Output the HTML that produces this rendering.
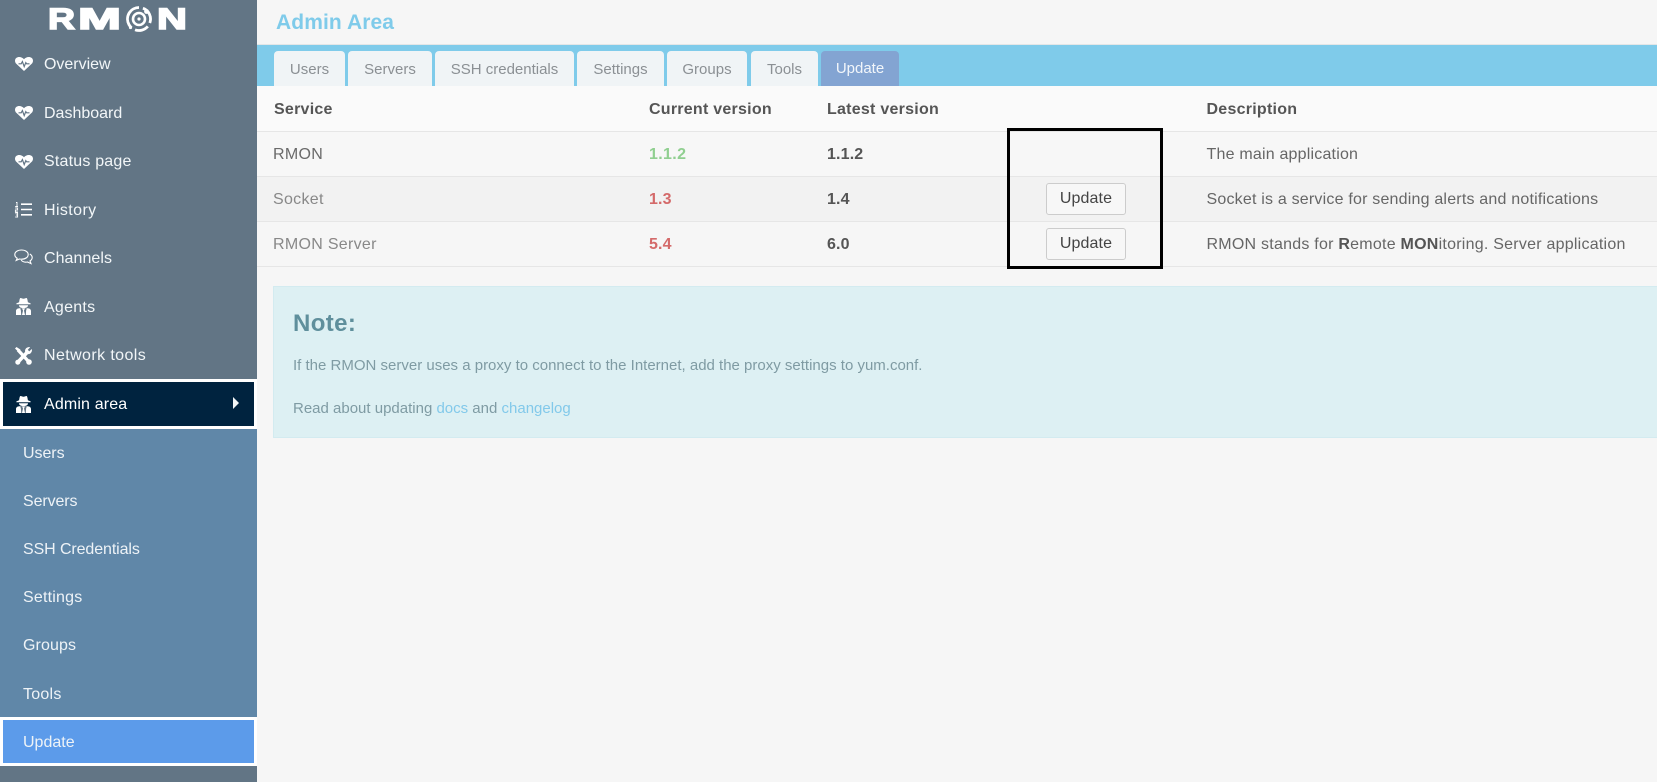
<!DOCTYPE html>
<html><head><meta charset="utf-8"><title>Admin Area</title>
<style>
html,body{margin:0;padding:0;width:1657px;height:782px;overflow:hidden;background:#f6f6f6;font-family:"Liberation Sans",sans-serif}
.a{position:absolute;display:block}
.t{position:absolute;white-space:nowrap;line-height:24px;height:24px}
.s{color:#f2f6f8;font-size:16px;letter-spacing:.05px;left:44px}
.u{color:#eef3f7;font-size:16px;letter-spacing:0;left:23px}
.tab{position:absolute;top:51px;height:35px;background:#f0f4f6;border-radius:4px 4px 0 0;color:#8b9094;font-size:15px;line-height:37px;text-align:center}
.h{font-size:16px;font-weight:bold;color:#555;letter-spacing:.25px}
.r{font-size:16px;letter-spacing:.25px}
.v{font-size:16px;font-weight:bold;letter-spacing:.15px}
.btn{position:absolute;left:1046px;width:78px;height:30px;border:1px solid #ccc;border-radius:3px;background:#f7f7f7;color:#444;font-size:16px;line-height:30px;text-align:center}
svg.i{position:absolute;left:15px;overflow:visible}
</style></head><body>
<svg width="0" height="0" style="position:absolute"><defs>
<symbol id="heart" viewBox="0 0 18 14"><path fill="#fff" d="M9 14 L1.4 6.9 C-.5 5-.4 2.2 1.4.9 C3.6-.7 7 0 9 2.2 C11-.1 14.4-.7 16.6.9 C18.4 2.2 18.5 5 16.6 6.9Z"/><polyline fill="none" stroke="#627585" stroke-width="1.2" points="3.5,6.8 6.2,6.8 7.4,4.6 9.2,9.6 10.8,5.6 11.6,6.8 14.5,6.8"/></symbol>
<symbol id="agent" viewBox="0 0 15 17"><path fill="#fff" d="M4.4 0 C5.4 0 6.4.8 7.5.8 C8.6.8 9.6 0 10.6 0 C11.2 0 11.6 2.4 11.9 4.2 L14.6 5.4 V6.2 H.4 V5.4 L3.1 4.2 C3.4 2.4 3.8 0 4.4 0Z M3 7.2 H12 C12 8.8 10.6 10 7.5 10 C4.4 10 3 8.8 3 7.2Z M0 17 V13 C0 11.4 1.2 10.4 3.4 10.2 H11.6 C13.8 10.4 15 11.4 15 13 V17Z"/><path fill="#627585" d="M4.2 10.2 H6 L7 12.6 L6 17 H5.2 L4.9 12.6Z M10.8 10.2 H9 L8 12.6 L9 17 H9.8 L10.1 12.6Z"/></symbol>
</defs></svg>

<!-- sidebar -->
<div class="a" style="left:0;top:0;width:257px;height:782px;background:#627585"></div>
<svg class="a" style="left:45px;top:3px" width="145" height="32" viewBox="45 3 145 32">
<g fill="#fff" font-family="Liberation Sans" font-weight="bold" font-size="30" stroke="#fff" stroke-width="1.5">
<text x="48" y="29.2" textLength="27" lengthAdjust="spacingAndGlyphs">R</text>
<text x="78" y="29.2" textLength="43" lengthAdjust="spacingAndGlyphs">M</text>
<text x="157" y="29.2" textLength="30" lengthAdjust="spacingAndGlyphs">N</text></g>
<g fill="none" stroke="#fff"><path stroke-width="2.8" stroke-dasharray="28 4 14 4 18 5" d="M139 7.5a11.5 11.5 0 1 0 .01 0Z"/><circle cx="139" cy="19" r="6" stroke-width="2.6"/></g><circle cx="139" cy="19" r="1.6" fill="#fff"/><circle cx="146.5" cy="11.5" r="2.4" fill="#fff"/><circle cx="130.5" cy="27.5" r="1.6" fill="#fff"/>
</svg>

<svg class="i" style="top:57px" width="18" height="14"><use href="#heart"/></svg><span class="t s" style="top:53px;letter-spacing:-.02px">Overview</span>
<svg class="i" style="top:106px" width="18" height="14"><use href="#heart"/></svg><span class="t s" style="top:102px;letter-spacing:0">Dashboard</span>
<svg class="i" style="top:155px" width="18" height="14"><use href="#heart"/></svg><span class="t s" style="top:150px;letter-spacing:.2px">Status page</span>
<svg class="i" style="top:202px" width="17" height="15" viewBox="0 0 17 15"><path stroke="#fff" stroke-width="1.6" fill="none" d="M6 2.2H17M6 7.5H17M6 12.8H17"/><path stroke="#fff" stroke-width=".9" fill="none" d="M1 .5H2V4M.2 4.5H3M.2 6H2.6V8H.4V10H3M.2 11H2.6V15H.2M.8 13H2.6"/></svg><span class="t s" style="top:199px;letter-spacing:.4px">History</span>
<svg class="i" style="top:249px;left:14px" width="19" height="17" viewBox="0 0 19 17"><g fill="none" stroke="#fff" stroke-width="1.1"><path d="M7.5 1C3.6 1 .8 3 .8 5.6 C.8 7.2 1.8 8.4 3.2 9.2 L2.2 11.4 L5.4 10 C6.2 10.2 6.8 10.2 7.5 10.2 C11.4 10.2 14.2 8.2 14.2 5.6 C14.2 3 11.4 1 7.5 1Z"/><path d="M15.8 5 C17.4 5.9 18.2 7.1 18.2 8.6 C18.2 10.1 17.2 11.2 16 12 L17 14.6 L13.4 13 C11 13.4 8.4 12.8 7.2 11"/></g></svg><span class="t s" style="top:247px;letter-spacing:.05px">Channels</span>
<svg class="i" style="top:298px;left:16px" width="15" height="17"><use href="#agent"/></svg><span class="t s" style="top:296px;letter-spacing:.25px">Agents</span>
<svg class="i" style="top:347px" width="17" height="18" viewBox="0 0 17 18"><g fill="none" stroke="#fff"><path stroke-width="3.2" d="M3 3 L14 15"/><path stroke-width="3.6" d="M12 5.5 L2.8 15.2"/></g><path fill="#fff" d="M0 1.5 L1.5 0 L5.5 2.6 L3.5 5Z M11.8 .8 C13 .1 14.4 0 15.2.3 L12.8 2.8 L14.2 4.4 L16.8 2 C17.3 3.6 16.6 5.6 15.2 6.6 C13.4 7.6 11.4 7 10.4 5.6 C9.6 3.8 10.2 1.8 11.8.8Z"/><circle cx="14" cy="15" r="2.8" fill="#fff"/><circle cx="2.8" cy="15.2" r="2.5" fill="#fff"/></svg><span class="t s" style="top:344px;letter-spacing:.4px">Network tools</span>

<div class="a" style="left:0;top:379px;width:257px;height:50px;background:#fff"></div>
<div class="a" style="left:3px;top:382px;width:251px;height:44px;background:#00233f"></div>
<svg class="i" style="top:396px;left:16px" width="15" height="17"><use href="#agent"/></svg><span class="t s" style="top:393px;color:#fff;letter-spacing:.15px">Admin area</span>
<svg class="a" style="left:233px;top:397px" width="6" height="12"><path fill="#f2f5f7" d="M0 0L6 6L0 12Z"/></svg>

<div class="a" style="left:0;top:429px;width:257px;height:288px;background:#6087a8"></div>
<span class="t u" style="top:442px;letter-spacing:-.05px">Users</span>
<span class="t u" style="top:490px;letter-spacing:-.1px">Servers</span>
<span class="t u" style="top:538px;letter-spacing:-.1px">SSH Credentials</span>
<span class="t u" style="top:586px;letter-spacing:.2px">Settings</span>
<span class="t u" style="top:634px;letter-spacing:.1px">Groups</span>
<span class="t u" style="top:683px;letter-spacing:.25px">Tools</span>
<div class="a" style="left:0;top:717px;width:257px;height:49px;background:#fff"></div>
<div class="a" style="left:3px;top:720px;width:251px;height:43px;background:#5c9bea"></div>
<span class="t u" style="top:731px">Update</span>

<!-- header -->
<span class="t" style="left:276px;top:11px;font-size:21px;font-weight:bold;color:#7fcbea;letter-spacing:.1px">Admin Area</span>
<div class="a" style="left:257px;top:44px;width:1400px;height:1px;background:#e3e6e7"></div>
<div class="a" style="left:257px;top:45px;width:1400px;height:41px;background:#7fcbea"></div>
<div class="tab" style="left:274px;width:71px">Users</div>
<div class="tab" style="left:348px;width:84px">Servers</div>
<div class="tab" style="left:435px;width:139px">SSH credentials</div>
<div class="tab" style="left:577px;width:87px">Settings</div>
<div class="tab" style="left:667px;width:80px">Groups</div>
<div class="tab" style="left:751px;width:67px">Tools</div>
<div class="tab" style="left:821px;width:78px;background:#83a4d2;color:#f2f6fa;line-height:35px">Update</div>

<!-- table -->
<div class="a" style="left:257px;top:86px;width:1400px;height:46px;background:#fafafa;border-bottom:1px solid #e6e6e6;box-sizing:border-box"></div>
<div class="a" style="left:257px;top:132px;width:1400px;height:45px;background:#f7f7f7;border-bottom:1px solid #e6e6e6;box-sizing:border-box"></div>
<div class="a" style="left:257px;top:177px;width:1400px;height:45px;background:#f2f2f2;border-bottom:1px solid #e6e6e6;box-sizing:border-box"></div>
<div class="a" style="left:257px;top:222px;width:1400px;height:45px;background:#f6f6f6;border-bottom:1px solid #e6e6e6;box-sizing:border-box"></div>

<span class="t h" style="left:274px;top:98px">Service</span>
<span class="t h" style="left:649px;top:98px">Current version</span>
<span class="t h" style="left:827px;top:98px">Latest version</span>
<span class="t h" style="left:1206.5px;top:98px">Description</span>

<span class="t r" style="left:273px;top:143px;color:#6a6a6a;letter-spacing:.3px">RMON</span>
<span class="t r" style="left:273px;top:188px;color:#888;letter-spacing:.3px">Socket</span>
<span class="t r" style="left:273px;top:233px;color:#888;letter-spacing:.3px">RMON Server</span>
<span class="t v" style="left:649px;top:143px;color:#90cf90;letter-spacing:.35px">1.1.2</span>
<span class="t v" style="left:649px;top:188px;color:#d46a6a">1.3</span>
<span class="t v" style="left:649px;top:233px;color:#d46a6a">5.4</span>
<span class="t v" style="left:827px;top:143px;color:#555">1.1.2</span>
<span class="t v" style="left:827px;top:188px;color:#555">1.4</span>
<span class="t v" style="left:827px;top:233px;color:#555">6.0</span>
<div class="btn" style="top:183px;letter-spacing:.1px">Update</div>
<div class="btn" style="top:228px;letter-spacing:.1px">Update</div>
<span class="t r" style="left:1206.5px;top:143px;color:#666;letter-spacing:.2px">The main application</span>
<span class="t r" style="left:1206.5px;top:188px;color:#666;letter-spacing:.2px">Socket is a service for sending alerts and notifications</span>
<span class="t r" style="left:1206.5px;top:233px;color:#666;letter-spacing:.24px">RMON stands for <b style="color:#555">R</b>emote <b style="color:#555">MON</b>itoring. Server application</span>

<div class="a" style="left:1007px;top:128px;width:156px;height:141px;border:3px solid #000;box-sizing:border-box"></div>

<!-- note -->
<div class="a" style="left:273px;top:286px;width:1384px;height:152px;background:#ddf0f3;border:1px solid #d3ebf0;border-right:0;box-sizing:border-box"></div>
<span class="t" style="left:293px;top:312px;font-size:24px;font-weight:bold;color:#5f8f9c;letter-spacing:.4px">Note:</span>
<span class="t" style="left:293px;top:354px;font-size:15px;color:#7f9ba3;letter-spacing:0">If the RMON server uses a proxy to connect to the Internet, add the proxy settings to yum.conf.</span>
<span class="t" style="left:293px;top:397px;font-size:15px;color:#7f9ba3;letter-spacing:0">Read about updating <span style="color:#82c9ea">docs</span> and <span style="color:#82c9ea">changelog</span></span>
</body></html>
